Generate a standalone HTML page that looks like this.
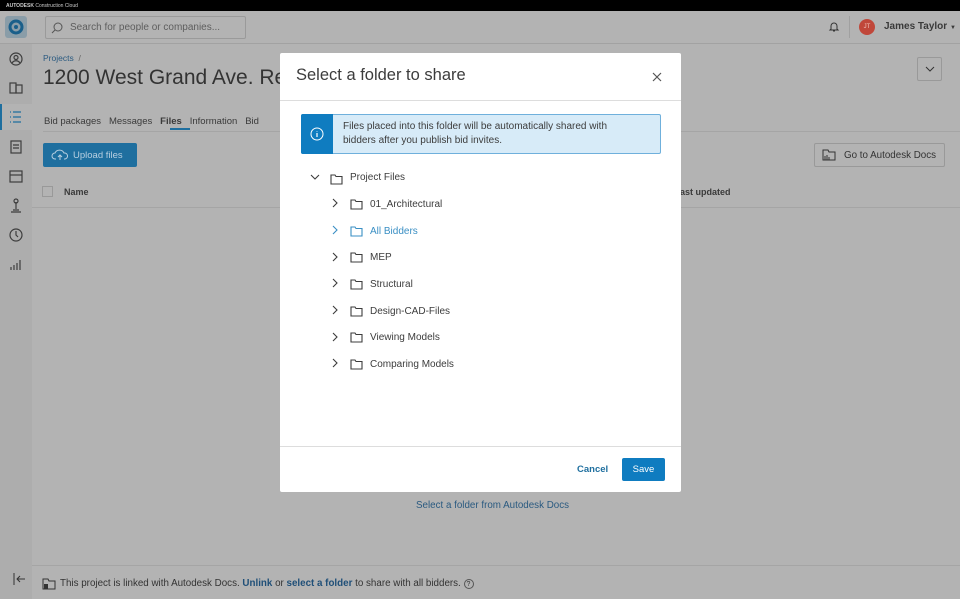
<!DOCTYPE html>
<html><head><meta charset="utf-8"><style>
*{box-sizing:border-box;margin:0;padding:0}
body{width:960px;height:599px;overflow:hidden;position:relative;background:#b3b3b3;font-family:"Liberation Sans",sans-serif;color:#333}
.abs{position:absolute}
.top{left:0;top:0;width:960px;height:11px;background:#000;color:#ccc;font-size:5px;padding:3px 6px;font-weight:bold}
.hdr{left:0;top:11px;width:960px;height:33px;background:#b3b3b3;border-bottom:1px solid #a2a2a2}
.side{left:0;top:44px;width:32px;height:555px;background:#adadad}
.search{left:45px;top:16px;width:201px;height:23px;border:1px solid #9a9a9a;border-radius:2px;font-size:10px;color:#5e5e5e;padding:5px 0 0 24px}
.t{font-size:10px;color:#3a3a3a}
svg{position:absolute;overflow:visible}
.dlg{left:280px;top:53px;width:401px;height:439px;background:#fff;border-radius:2px}
.row{position:absolute;font-size:10px;color:#3c3c3c}
</style></head><body>
<div class="abs top">AUTODESK <span style="font-weight:normal">Construction Cloud</span></div>
<div class="abs hdr"></div>
<div class="abs" style="left:5px;top:16px;width:22px;height:22px;background:#8a9da8;border-radius:3px"></div>
<svg style="left:8px;top:19px" width="16" height="16"><circle cx="8" cy="8" r="6" fill="none" stroke="#1a5f8a" stroke-width="3"/><circle cx="8" cy="8" r="2" fill="#1a5f8a"/></svg>
<div class="abs search">Search for people or companies...</div>
<svg style="left:52px;top:22px" width="12" height="12"><circle cx="6" cy="5" r="4" fill="none" stroke="#555"/><path d="M3 8 L0 11" stroke="#555"/></svg>
<svg style="left:829px;top:21px" width="10" height="12"><path d="M2 8V5a3 3 0 0 1 6 0v3l1 1H1z M4 10h2" fill="none" stroke="#333"/></svg>
<div class="abs" style="left:849px;top:16px;width:1px;height:22px;background:#a0a0a0"></div>
<div class="abs" style="left:859px;top:19px;width:16px;height:16px;border-radius:50%;background:#c0473a;color:#f0c0b8;font-size:6px;text-align:center;line-height:16px">JT</div>
<div class="abs t" style="left:884px;top:21px;font-weight:bold;font-size:10px">James Taylor <span style="font-size:6px">▼</span></div>
<div class="abs side"></div>
<div class="abs" style="left:0;top:104px;width:32px;height:26px;background:#b3b3b3;border-left:2px solid #1f6f9f"></div>
<svg style="left:9px;top:52px" width="14" height="240" fill="none" stroke="#3d3d3d" stroke-width="1.2">
<circle cx="7" cy="7" r="6"/><circle cx="7" cy="5.5" r="2"/><path d="M3 11c2-3 6-3 8 0"/>
<rect x="1" y="31" width="6" height="10"/><rect x="7" y="33" width="6" height="8"/>
<path d="M4 60h8M4 65h8M4 70h8M1 60h1M1 65h1M1 70h1" stroke="#1f6f9f"/>
<rect x="2" y="89" width="10" height="12"/><path d="M4 93h6M4 96h6"/>
<rect x="1" y="119" width="12" height="11"/><path d="M1 123h12"/>
<path d="M4 158h6M2 160h10M7 150v7" /><circle cx="7" cy="149" r="2"/>
<circle cx="7" cy="183" r="6"/><path d="M7 179v4l2 2"/>
<path d="M2 218v-3M5 218v-5M8 218v-7M11 218v-10"/>
</svg>
<svg style="left:13px;top:573px" width="14" height="12"><path d="M1 0v12M12 6H4m3-3-3 3 3 3" fill="none" stroke="#333"/></svg>
<div class="abs" style="left:32px;top:565px;width:928px;height:1px;background:#a5a5a5"></div>
<div class="abs" style="left:43px;top:53px;font-size:8.5px;color:#2a5a80">Projects <span style="color:#666">&nbsp;/</span></div>
<div class="abs" style="left:43px;top:66px;font-size:21px;color:#333">1200 West Grand Ave. Ren</div>
<div class="abs t" style="left:44px;top:116px;font-size:9.5px;word-spacing:0">Bid packages &nbsp;&nbsp;Messages &nbsp;&nbsp;<b>Files</b> &nbsp;&nbsp;Information &nbsp;&nbsp;Bid</div>
<div class="abs" style="left:170px;top:128px;width:20px;height:2px;background:#1f6f9f"></div>
<div class="abs" style="left:43px;top:131px;width:917px;height:1px;background:#a5a5a5"></div>
<div class="abs" style="left:43px;top:143px;width:94px;height:24px;background:#1f6f9f;border-radius:2px;color:#b8cfe0;font-size:9.5px;padding:7px 0 0 30px">Upload files</div>
<svg style="left:52px;top:149px" width="16" height="12"><path d="M4 10H3a3 3 0 0 1 0-6 5 5 0 0 1 9 0 3 3 0 0 1 1 6h-1M8 11V6m-2 2 2-2 2 2" fill="none" stroke="#b8cfe0"/></svg>
<div class="abs" style="left:814px;top:143px;width:131px;height:24px;border:1px solid #999;border-radius:2px;font-size:9.8px;color:#333;padding:6px 0 0 29px">Go to Autodesk Docs</div>
<svg style="left:822px;top:148px" width="14" height="13"><path d="M1 2h5l1 2h6v8H1z" fill="none" stroke="#333"/><path d="M3 12V8M5 12V7M7 12V9" stroke="#333"/></svg>
<div class="abs" style="left:917px;top:57px;width:25px;height:24px;border:1px solid #999;border-radius:2px"></div>
<svg style="left:925px;top:66px" width="10" height="6"><path d="M1 1l4 4 4-4" fill="none" stroke="#333"/></svg>
<div class="abs" style="left:42px;top:186px;width:11px;height:11px;border:1px solid #999"></div>
<div class="abs t" style="left:64px;top:187px;font-weight:bold;font-size:9px">Name</div>
<div class="abs t" style="left:680px;top:187px;font-weight:bold;font-size:9px">ast updated</div>
<div class="abs" style="left:32px;top:207px;width:928px;height:1px;background:#a5a5a5"></div>
<div class="abs" style="left:416px;top:500px;font-size:9.8px;color:#2a5a80">Select a folder from Autodesk Docs</div>
<svg style="left:42px;top:577px" width="14" height="13"><path d="M1 2h5l1 2h6v8H1z" fill="none" stroke="#333"/><rect x="2" y="7" width="4" height="5" fill="#333"/></svg>
<div class="abs" style="left:60px;top:578px;font-size:9.8px;color:#333">This project is linked with Autodesk Docs. <b style="color:#1f4f78">Unlink</b> or <b style="color:#1f4f78">select a folder</b> to share with all bidders. <span style="display:inline-block;width:10px;height:10px;border:1px solid #555;border-radius:50%;font-size:7px;text-align:center;line-height:9px">?</span></div>

<div class="abs dlg">
<div class="abs" style="left:16px;top:13px;font-size:16.5px;color:#3c3c3c">Select a folder to share</div>
<svg style="left:372px;top:19px" width="10" height="10"><path d="M1 1l8 8M9 1l-8 8" stroke="#555" stroke-width="1.2"/></svg>
<div class="abs" style="left:0;top:47px;width:401px;height:1px;background:#ddd"></div>
<div class="abs" style="left:21px;top:61px;width:360px;height:40px;background:#d7ebf8;border:1px solid #6fb0dc;border-radius:2px"></div>
<div class="abs" style="left:21px;top:61px;width:32px;height:40px;background:#0f7cc0;border-radius:2px 0 0 2px"></div>
<svg style="left:30px;top:74px" width="14" height="14"><circle cx="7" cy="7" r="6" fill="none" stroke="#fff"/><path d="M7 6v4M7 4v.5" stroke="#fff" stroke-width="1.2"/></svg>
<div class="abs" style="left:63px;top:67px;font-size:10px;color:#3c3c3c;line-height:13.5px">Files placed into this folder will be automatically shared with<br>bidders after you publish bid invites.</div>
<svg style="left:31px;top:120px" width="60" height="200" fill="none" stroke="#3c3c3c" stroke-width="1.1">
<path d="M0 2l4 4 4-4"/>
<path d="M20 2h4l1 1.5h6v7.5h-11z"/>
<path d="M22 26l4 4-4 4M22 80l4 4-4 4M22 106l4 4-4 4M22 133l4 4-4 4M22 160l4 4-4 4M22 186l4 4-4 4" />
<path d="M22 53l4 4-4 4" stroke="#3a8fc4"/>
</svg>
<svg style="left:70px;top:145px" width="14" height="200" fill="none" stroke="#3c3c3c" stroke-width="1.1">
<path d="M1 2h4l1 1.5h6v7.5h-11z"/>
<path d="M1 29h4l1 1.5h6v7.5h-11z" stroke="#3a8fc4"/>
<path d="M1 55h4l1 1.5h6v7.5h-11z"/>
<path d="M1 82h4l1 1.5h6v7.5h-11z"/>
<path d="M1 109h4l1 1.5h6v7.5h-11z"/>
<path d="M1 135h4l1 1.5h6v7.5h-11z"/>
<path d="M1 162h4l1 1.5h6v7.5h-11z"/>
</svg>
<div class="row" style="left:70px;top:119px">Project Files</div>
<div class="row" style="left:90px;top:146px">01_Architectural</div>
<div class="row" style="left:90px;top:173px;color:#3a8fc4">All Bidders</div>
<div class="row" style="left:90px;top:199px">MEP</div>
<div class="row" style="left:90px;top:226px">Structural</div>
<div class="row" style="left:90px;top:253px">Design-CAD-Files</div>
<div class="row" style="left:90px;top:279px">Viewing Models</div>
<div class="row" style="left:90px;top:306px">Comparing Models</div>
<div class="abs" style="left:0;top:393px;width:401px;height:1px;background:#ddd"></div>
<div class="abs" style="left:297px;top:411px;font-size:9.5px;color:#1f6f9f;font-weight:bold">Cancel</div>
<div class="abs" style="left:342px;top:405px;width:43px;height:23px;background:#0f7cc0;border-radius:2px;color:#fff;font-size:9.5px;text-align:center;line-height:23px">Save</div>
</div>
</body></html>
